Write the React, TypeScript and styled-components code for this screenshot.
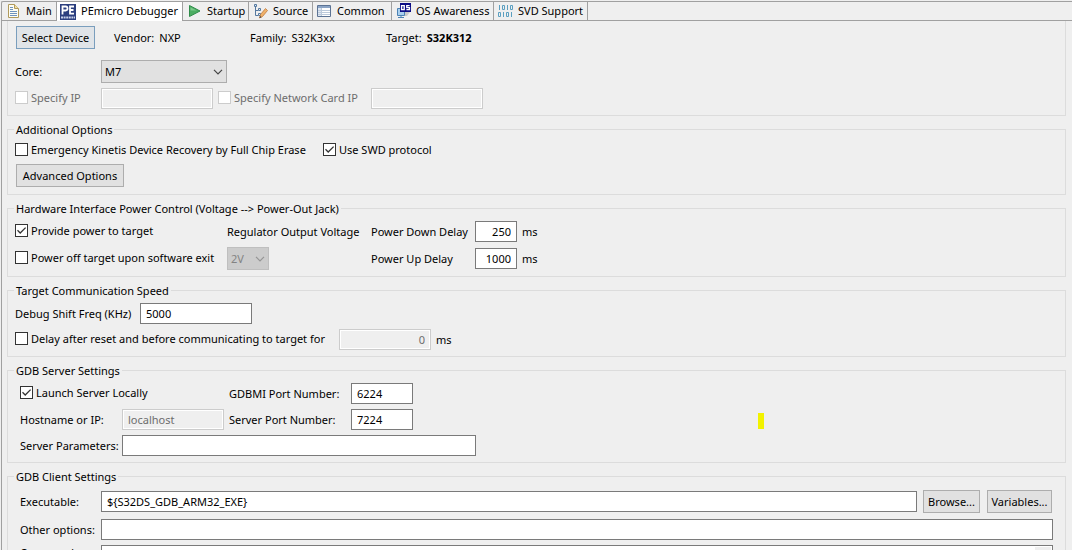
import React from "react";
import styled, { createGlobalStyle, css } from "styled-components";

const GlobalStyle = createGlobalStyle`
  * { box-sizing: border-box; }
  body {
    margin: 0;
    background: #efefef;
    color: #000;
    font: 11px/15px "Noto Sans", "Open Sans", sans-serif;
  }
`;

const Page = styled.div`
  height: 100vh;
  overflow: hidden;
  display: flex;
  flex-direction: column;
  padding: 1px 0 0 1px;
`;

const TabBar = styled.nav`
  display: flex;
  flex: none;
  height: 20px;
  border-top: 1px solid #a0a0a0;
  border-bottom: 1px solid #a0a0a0;
  border-left: 1px solid #a0a0a0;
  border-top-left-radius: 2px;
`;

const Tab = styled.button<{ $width: number; $active?: boolean }>`
  display: flex;
  align-items: center;
  gap: 5px;
  width: ${(p) => p.$width}px;
  height: ${(p) => (p.$active ? 19 : 18)}px;
  padding: 0 0 0 3px;
  border: 0;
  border-right: 1px solid #a0a0a0;
  background: ${(p) => (p.$active ? "#fff" : "transparent")};
  color: inherit;
  font: inherit;
  white-space: nowrap;
  svg { flex: none; }
`;

const TabText = styled.span`
  padding-bottom: 2px;
`;

const Panel = styled.main`
  flex: 1;
  min-height: 0;
  overflow: hidden;
  border-left: 1px solid #a0a0a0;
  padding: 0 6px 0 5px;
`;

const groupBox = css`
  position: relative;
  min-width: 0;
  margin: 0;
  padding: 0;
  border: 1px solid #dcdcdc;
`;

const DeviceBox = styled.section`
  ${groupBox}
  border-top: 0;
`;

const Group = styled.fieldset`
  ${groupBox}
  margin-top: 6px;
`;

const Legend = styled.legend`
  margin-left: 6px;
  padding: 0 2px;
  height: 15px;
`;

const Body = styled.div<{ $side?: number; $top?: number; $bottom?: number }>`
  display: flex;
  flex-direction: column;
  gap: 5px;
  padding: ${(p) => p.$top ?? 5}px ${(p) => p.$side ?? 7}px ${(p) => p.$bottom ?? 6}px;
`;

const Row = styled.div<{ $cols?: string; $after?: number; $align?: string }>`
  display: grid;
  grid-template-columns: ${(p) => p.$cols ?? "auto"};
  justify-content: ${(p) => (p.$cols?.includes("fr") ? "stretch" : "start")};
  align-items: ${(p) => p.$align ?? "center"};
  column-gap: 5px;
  row-gap: 5px;
  margin-bottom: ${(p) => p.$after ?? 0}px;
  white-space: nowrap;
`;

const Fact = styled.span`
  display: flex;
  gap: 5px;
`;

const Button = styled.button<{ $width: number; $focused?: boolean }>`
  width: ${(p) => p.$width}px;
  height: 23px;
  margin: 0 1px;
  padding: 0;
  border: 1px solid ${(p) => (p.$focused ? "#7a9ebd" : "#adadad")};
  background: ${(p) => (p.$focused ? "#e0e4e8" : "#e1e1e1")};
  color: inherit;
  font: inherit;
  white-space: nowrap;
`;

const TextBox = styled.input<{ $right?: boolean }>`
  width: 100%;
  min-width: 0;
  height: 21px;
  padding: 0 5px;
  border: 1px solid #7a7a7a;
  border-radius: 0;
  background: #fff;
  color: inherit;
  font: inherit;
  text-align: ${(p) => (p.$right ? "right" : "left")};
  &:disabled {
    border-color: #ccc;
    background: #efefef;
    box-shadow: inset 0 0 0 1px #fff;
    color: #6d6d6d;
  }
`;

const CheckLabel = styled.label<{ $disabled?: boolean }>`
  display: flex;
  align-items: center;
  gap: 3px;
  padding-bottom: 2px;
  color: ${(p) => (p.$disabled ? "#6d6d6d" : "inherit")};
`;

const CheckInput = styled.input`
  appearance: none;
  flex: none;
  width: 13px;
  height: 13px;
  margin: 0;
  border: 1px solid #333;
  background: #fff;
  &:checked {
    background: #fff
      url("data:image/svg+xml,%3Csvg xmlns='http://www.w3.org/2000/svg' viewBox='0 0 11 11'%3E%3Cpath d='M1.5 5.3 4.2 8 9.6 2.6' fill='none' stroke='%23333' stroke-width='1.3'/%3E%3C/svg%3E");
  }
  &:disabled { border-color: #ccc; }
`;

const ComboWrap = styled.span<{ $width: number }>`
  display: grid;
  width: ${(p) => p.$width}px;
  align-items: center;
  > * { grid-area: 1 / 1; }
  svg {
    justify-self: end;
    margin-right: 4px;
    pointer-events: none;
  }
`;

const ComboSelect = styled.select`
  appearance: none;
  width: 100%;
  height: 23px;
  padding: 0 3px;
  border: 1px solid #adadad;
  border-radius: 0;
  background: #e1e1e1;
  color: inherit;
  font: inherit;
  &:disabled {
    border-color: #bfbfbf;
    background: #ccc;
    color: #838383;
    opacity: 1;
  }
`;

const CommandBox = styled.textarea`
  display: block;
  width: 100%;
  height: 60px;
  border: 1px solid #7a7a7a;
  background: #fff;
  resize: none;
  overflow-y: hidden;
  font: inherit;
`;

const CommandWrap = styled.div`
  position: relative;
`;

const ScrollTrack = styled.span`
  position: absolute;
  top: 2px;
  right: 2px;
  bottom: 2px;
  width: 16px;
  background: #efefef;
`;

const Marker = styled.span`
  position: absolute;
  left: 750px;
  top: 35px;
  width: 6px;
  height: 16px;
  background: #f2f200;
`;

function Check({ label, checked, disabled }: { label: string; checked?: boolean; disabled?: boolean }) {
  return (
    <CheckLabel $disabled={disabled}>
      <CheckInput type="checkbox" defaultChecked={checked} disabled={disabled} />
      {label}
    </CheckLabel>
  );
}

function Combo({ label, value, width, disabled }: { label: string; value: string; width: number; disabled?: boolean }) {
  return (
    <ComboWrap $width={width}>
      <ComboSelect aria-label={label} disabled={disabled} defaultValue={value}>
        <option>{value}</option>
      </ComboSelect>
      <svg width="10" height="6" viewBox="0 0 10 6">
        <path d="M1 .8 5 4.8 9 .8" fill="none" stroke={disabled ? "#959595" : "#444"} strokeWidth="1.2" />
      </svg>
    </ComboWrap>
  );
}

const icon = { width: 16, height: 16, viewBox: "0 0 16 16", "aria-hidden": true };

const PageIcon = () => (
  <svg {...icon}>
    <path d="M3.5 1.500h6l4 4v9h-10z" fill="#fdfdf4" stroke="#b09a5c" />
    <path d="M9.500 1.500v4h4" fill="#f1dfa4" stroke="#b09a5c" />
    <path d="M5 4.500h3M5 6.500h3M5 8.500h7M5 10.500h7M5 12.500h7" stroke="#6f93bd" />
  </svg>
);

const PEIcon = () => (
  <svg {...icon}>
    <path d="M0 0h16v16H0z" fill="#2c3f7f" />
    <path d="M2.500 10.500v-8h3.200q1.800 0 1.800 2t-1.800 2H3M14 2.500H10v7.200h4M10 6h3.500" fill="none" stroke="#fff" strokeWidth="1.800" />
    <path d="M1 13.500h14" stroke="#c9d2ea" strokeWidth="2" strokeDasharray="2 .6" />
  </svg>
);

const RunIcon = () => (
  <svg {...icon}>
    <path d="M3.500 2.500v11L14 8z" fill="#4bad62" stroke="#2f8c4a" />
    <path d="M4.500 4.300v3.200h6z" fill="#7cc98b" />
  </svg>
);

const SourceIcon = () => (
  <svg {...icon}>
    <path d="M3.500 3v9.500H6M3.500 7.500H6" fill="none" stroke="#54789f" />
    <path d="M2.500 1.500h2v2h-2zM6.500 5.500h2v2h-2zM6.500 10.500h2v2h-2z" fill="#dce8f5" stroke="#54789f" />
    <path d="M7.500 15l1-3.500 5-6 2 2-5 6z" fill="#f0b36c" stroke="#c07a3c" strokeWidth=".8" />
    <path d="M7.500 15l.6-2 1.500 1.300z" fill="#444" />
  </svg>
);

const CommonIcon = () => (
  <svg {...icon}>
    <path d="M1.500 2.500h13v11h-13z" fill="#fff" stroke="#5c7394" />
    <path d="M2 3h12v2H2z" fill="#8ba4c5" />
    <path d="M2 5h3v8H2z" fill="#dde6f1" />
    <path d="M5.500 5v8M2 7.500h12M2 9.500h12M2 11.500h12" stroke="#bccadb" />
  </svg>
);

const OSIcon = () => (
  <svg {...icon}>
    <path d="M8 9h7l-3 4H8z" fill="#c9c9c9" />
    <path d="M2.500 5.500h7v7h-7z" fill="#a9cfee" stroke="#4c82b4" />
    <path d="M6 13v2M3 14.500h6" stroke="#4c82b4" />
    <path d="M5 0h11v9H5z" fill="#0c0c85" />
    <path d="M6.600 2.600h2.600v4H6.600zM14.600 2.600h-2.800v2h2.600v2h-3" fill="none" stroke="#fff" strokeWidth="1.400" />
  </svg>
);

const BitsIcon = () => (
  <svg {...icon} viewBox="-1 0 16 16">
    <path
      d="M1.500 2v5M9.500 2v5M5.500 9v5M13.500 9v5M4.500 2.500h2v4h-2zM12.500 2.500h2v4h-2zM.5 9.500h2v4h-2zM8.500 9.500h2v4h-2z"
      fill="none"
      stroke="#5b9fc0"
    />
  </svg>
);

const tabs = [
  { label: "Main", width: 55, Icon: PageIcon },
  { label: "PEmicro Debugger", width: 126, Icon: PEIcon, active: true },
  { label: "Startup", width: 66, Icon: RunIcon },
  { label: "Source", width: 64, Icon: SourceIcon },
  { label: "Common", width: 79, Icon: CommonIcon },
  { label: "OS Awareness", width: 102, Icon: OSIcon },
  { label: "SVD Support", width: 94, Icon: BitsIcon },
];

export default function App() {
  return (
    <>
      <GlobalStyle />
      <Page>
        <TabBar>
          {tabs.map(({ label, width, Icon, active }) => (
            <Tab key={label} type="button" $width={width} $active={active}>
              <Icon />
              <TabText>{label}</TabText>
            </Tab>
          ))}
        </TabBar>
        <Panel>
          <DeviceBox>
            <Body>
              <Row $cols="94px 131px 131px auto" $after={6}>
                <Button type="button" $width={79} $focused>Select Device</Button>
                <Fact><span>Vendor:</span><span>NXP</span></Fact>
                <Fact><span>Family:</span><span>S32K3xx</span></Fact>
                <Fact><span>Target:</span><b>S32K312</b></Fact>
              </Row>
              <Row $cols="81px auto">
                <span>Core:</span>
                <Combo label="Core" value="M7" width={126} />
              </Row>
              <Row $cols="81px 112px 148px 112px">
                <Check label="Specify IP" disabled />
                <TextBox aria-label="IP address" disabled />
                <Check label="Specify Network Card IP" disabled />
                <TextBox aria-label="Network card IP address" disabled />
              </Row>
            </Body>
          </DeviceBox>

          <Group>
            <Legend>Additional Options</Legend>
            <Body $bottom={7}>
              <Row $cols="303px auto">
                <Check label="Emergency Kinetis Device Recovery by Full Chip Erase" />
                <Check label="Use SWD protocol" checked />
              </Row>
              <Row>
                <Button type="button" $width={108}>Advanced Options</Button>
              </Row>
            </Body>
          </Group>

          <Group>
            <Legend>Hardware Interface Power Control (Voltage --&gt; Power-Out Jack)</Legend>
            <Body>
              <Row $cols="207px 139px 99px 42px auto">
                <Check label="Provide power to target" checked />
                <span>Regulator Output Voltage</span>
                <label htmlFor="down">Power Down Delay</label>
                <TextBox id="down" defaultValue="250" $right />
                <span>ms</span>
                <Check label="Power off target upon software exit" />
                <Combo label="Regulator Output Voltage" value="2V" width={42} disabled />
                <label htmlFor="up">Power Up Delay</label>
                <TextBox id="up" defaultValue="1000" $right />
                <span>ms</span>
              </Row>
            </Body>
          </Group>

          <Group>
            <Legend>Target Communication Speed</Legend>
            <Body>
              <Row $cols="120px 112px">
                <label htmlFor="freq">Debug Shift Freq (KHz)</label>
                <TextBox id="freq" defaultValue="5000" />
              </Row>
              <Row $cols="319px 92px auto">
                <Check label="Delay after reset and before communicating to target for" />
                <TextBox aria-label="Delay in milliseconds" defaultValue="0" disabled $right />
                <span>ms</span>
              </Row>
            </Body>
          </Group>

          <Group>
            <Legend>GDB Server Settings</Legend>
            <Body $side={12}>
              <Row $cols="204px 117px 62px">
                <Check label="Launch Server Locally" checked />
                <label htmlFor="gdbmi">GDBMI Port Number:</label>
                <TextBox id="gdbmi" defaultValue="6224" />
              </Row>
              <Row $cols="97px 102px 117px 62px">
                <label htmlFor="host">Hostname or IP:</label>
                <TextBox id="host" defaultValue="localhost" disabled />
                <label htmlFor="port">Server Port Number:</label>
                <TextBox id="port" defaultValue="7224" />
              </Row>
              <Row $cols="97px 354px">
                <label htmlFor="params">Server Parameters:</label>
                <TextBox id="params" />
              </Row>
            </Body>
            <Marker />
          </Group>

          <Group>
            <Legend>GDB Client Settings</Legend>
            <Body $side={12} $top={6}>
              <Row $cols="76px 1fr auto auto" $after={1}>
                <label htmlFor="exe">Executable:</label>
                <TextBox id="exe" defaultValue="${S32DS_GDB_ARM32_EXE}" />
                <Button type="button" $width={57}>Browse...</Button>
                <Button type="button" $width={65}>Variables...</Button>
              </Row>
              <Row $cols="76px 1fr">
                <label htmlFor="other">Other options:</label>
                <TextBox id="other" />
              </Row>
              <Row $cols="76px 1fr" $align="start">
                <label htmlFor="commands">Commands:</label>
                <CommandWrap>
                  <CommandBox id="commands" />
                  <ScrollTrack />
                </CommandWrap>
              </Row>
            </Body>
          </Group>
        </Panel>
      </Page>
    </>
  );
}
